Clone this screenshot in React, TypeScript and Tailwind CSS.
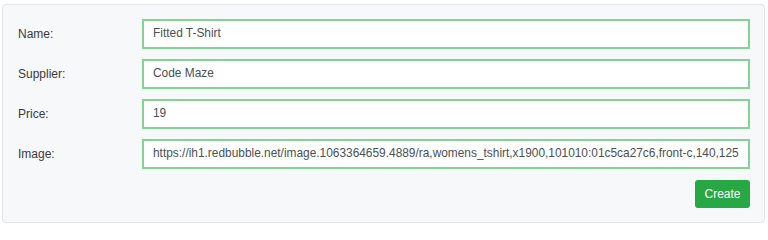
import React from "react";

const rows = [
  { label: "Name:", value: "Fitted T-Shirt" },
  { label: "Supplier:", value: "Code Maze" },
  { label: "Price:", value: "19" },
  {
    label: "Image:",
    value:
      "https://ih1.redbubble.net/image.1063364659.4889/ra,womens_tshirt,x1900,101010:01c5ca27c6,front-c,140,125",
  },
];

export default function App() {
  return (
    <div
      className="w-[768px] h-[228px] bg-white pt-[4px] pl-[2px] pr-[3px]"
      style={{ fontFamily: '"Liberation Sans", Arial, sans-serif' }}
    >
      <div className="h-[219px] rounded-[4px] border border-[#e3e5e8] bg-[#f7f8f9] pt-[14px] pl-[15px] pr-[14px]">
        <div className="flex flex-col gap-[10px]">
          {rows.map((r) => (
            <div key={r.label} className="flex items-center h-[30px]">
              <div className="w-[124px] text-[12px] text-[#3a3a3a]">{r.label}</div>
              <div className="flex-1 h-[30px] border-2 border-[#84d396] bg-white flex items-center pl-[9px] text-[11.9px] text-[#4a4f55] whitespace-nowrap overflow-hidden">
                {r.value}
              </div>
            </div>
          ))}
        </div>
        <div className="flex justify-end mt-[11px]">
          <button className="w-[55px] h-[28px] rounded-[3px] bg-[#28a745] text-white text-[12px]">
            Create
          </button>
        </div>
      </div>
    </div>
  );
}
